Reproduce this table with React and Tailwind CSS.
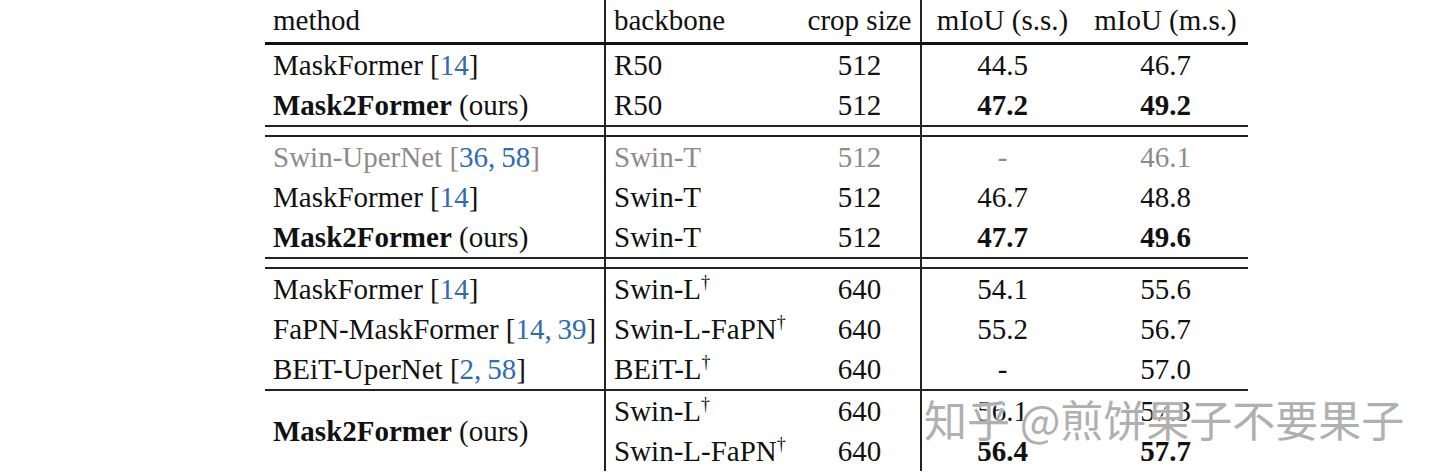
import React from "react";

const Cite = ({ refs }) => (
  <>
    [
    {refs.map((r, i) => (
      <span key={r} className="text-[#2f6cb0]">
        {r}
        {i < refs.length - 1 ? ",\u2009" : ""}
      </span>
    ))}
    ]
  </>
);

const Dag = () => <span className="text-[18px] leading-none align-[11px]">†</span>;

const ours = (
  <span>
    <b>Mask2Former</b> (ours)
  </span>
);

const groups = [
  [
    { method: <>MaskFormer <Cite refs={["14"]} /></>, backbone: "R50", crop: "512", ss: "44.5", ms: "46.7" },
    { method: ours, backbone: "R50", crop: "512", ss: "47.2", ms: "49.2", bold: true },
  ],
  [
    { method: <>Swin-UperNet <Cite refs={["36", "58"]} /></>, backbone: "Swin-T", crop: "512", ss: "-", ms: "46.1", gray: true },
    { method: <>MaskFormer <Cite refs={["14"]} /></>, backbone: "Swin-T", crop: "512", ss: "46.7", ms: "48.8" },
    { method: ours, backbone: "Swin-T", crop: "512", ss: "47.7", ms: "49.6", bold: true },
  ],
  [
    { method: <>MaskFormer <Cite refs={["14"]} /></>, backbone: <>Swin-L<Dag /></>, crop: "640", ss: "54.1", ms: "55.6" },
    { method: <>FaPN-MaskFormer <Cite refs={["14", "39"]} /></>, backbone: <>Swin-L-FaPN<Dag /></>, crop: "640", ss: "55.2", ms: "56.7" },
    { method: <>BEiT-UperNet <Cite refs={["2", "58"]} /></>, backbone: <>BEiT-L<Dag /></>, crop: "640", ss: "-", ms: "57.0" },
  ],
];

const cols = "grid grid-cols-[339px_195px_121px_163px_165px]";

const Row = ({ row }) => (
  <div className={`${cols} h-[40px] leading-[40px] ${row.gray ? "text-[#8c8c8c]" : "text-[#111]"}`}>
    <div className="pl-[8px] whitespace-nowrap">{row.method}</div>
    <div className="border-l-2 border-[#222] pl-[8px] whitespace-nowrap">{row.backbone}</div>
    <div className="text-center">{row.crop}</div>
    <div className={`border-l-2 border-[#222] text-center ${row.bold ? "font-bold" : ""}`}>{row.ss}</div>
    <div className={`text-center ${row.bold ? "font-bold" : ""}`}>{row.ms}</div>
  </div>
);

const Gap = () => (
  <div className={`${cols} h-[8px]`}>
    <div />
    <div className="border-l-2 border-[#222]" />
    <div />
    <div className="border-l-2 border-[#222]" />
    <div />
  </div>
);

const Rule = ({ thick }) => <div className={`${thick ? "h-[3px] bg-[#111]" : "h-[2px] bg-[#222]"}`} />;

export default function App() {
  return (
    <div className="relative h-[474px] w-[1440px] overflow-hidden bg-white font-['Liberation_Serif',serif] text-[29px] text-[#111]">
      <div className="ml-[265px] w-[983px]">
        <div className={`${cols} h-[42px] leading-[40px]`}>
          <div className="pl-[8px]">method</div>
          <div className="border-l-2 border-[#222] pl-[8px]">backbone</div>
          <div className="text-center">crop size</div>
          <div className="border-l-2 border-[#222] text-center">mIoU (s.s.)</div>
          <div className="text-center">mIoU (m.s.)</div>
        </div>
        <Rule thick />
        {groups.map((g, gi) => (
          <div key={gi}>
            {g.map((row, ri) => (
              <Row key={ri} row={row} />
            ))}
            <Rule />
            {gi < groups.length - 1 && (
              <>
                <Gap />
                <Rule />
              </>
            )}
          </div>
        ))}
        <div className={`${cols} grid-rows-[40px_40px] leading-[40px]`}>
          <div className="row-span-2 flex items-center pl-[8px] whitespace-nowrap">{ours}</div>
          <div className="border-l-2 border-[#222] pl-[8px]">Swin-L<Dag /></div>
          <div className="text-center">640</div>
          <div className="border-l-2 border-[#222] text-center">56.1</div>
          <div className="text-center">57.3</div>
          <div className="border-l-2 border-[#222] pl-[8px]">Swin-L-FaPN<Dag /></div>
          <div className="text-center">640</div>
          <div className="border-l-2 border-[#222] text-center font-bold">56.4</div>
          <div className="text-center font-bold">57.7</div>
        </div>
      </div>
      <div className="absolute left-[924px] top-[388px] whitespace-nowrap font-['Noto_Sans_CJK_SC',sans-serif] text-[43px] leading-[60px] text-[#b0b0b0] [text-shadow:0_0_2px_#fff,0_0_2px_#fff]">
        知乎 @煎饼果子不要果子
      </div>
    </div>
  );
}
